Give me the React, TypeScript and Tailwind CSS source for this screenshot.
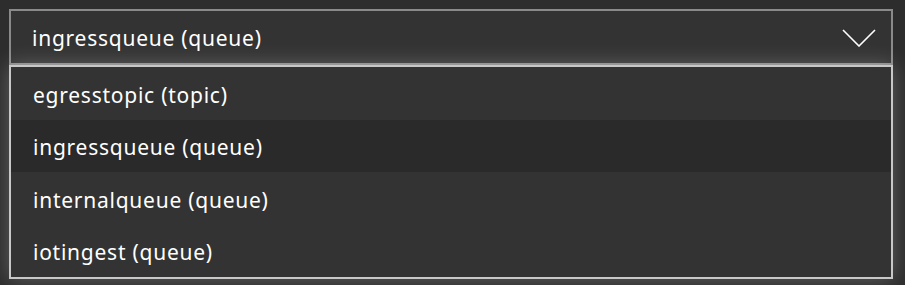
import { useState } from 'react';

const options = [
  { name: 'egresstopic', kind: 'topic' },
  { name: 'ingressqueue', kind: 'queue' },
  { name: 'internalqueue', kind: 'queue' },
  { name: 'iotingest', kind: 'queue' },
];

export default function App() {
  const [selected] = useState(1);
  const font = { fontFamily: '"Segoe UI", "Noto Sans", "Open Sans", sans-serif' };

  return (
    <div className="w-[905px] h-[285px] bg-[#2d2d2d] pt-[9px] pl-[9px] overflow-hidden" style={font}>
      <div className="relative w-[884px]">
        <div className="h-[56px] border-2 border-[#8a8a8a] bg-[#333333] flex items-center justify-between pl-[21px] pr-[15px] text-white text-[21px] tracking-[0.75px]">
          <span className="pt-[3px]">
            {options[selected].name} ({options[selected].kind})
          </span>
          <svg width="34" height="18" viewBox="0 0 34 18" fill="none" className="mt-[2px]">
            <path d="M1 1 L17 17 L33 1" stroke="white" strokeWidth="1.6" />
          </svg>
        </div>
        <ul className="absolute left-0 top-[56px] w-[884px] border-2 border-[#c8c8c8] bg-[#333333] shadow-[0_0_20px_rgba(255,255,255,0.25)]">
          {options.map((o, i) => (
            <li
              key={o.name}
              className={`h-[52.5px] flex items-center pl-[22px] text-white text-[21px] tracking-[0.75px] ${
                i === selected ? 'bg-[#2a2a2a]' : ''
              }`}
            >
              <span className="pt-[4px]">
                {o.name} ({o.kind})
              </span>
            </li>
          ))}
        </ul>
      </div>
    </div>
  );
}
